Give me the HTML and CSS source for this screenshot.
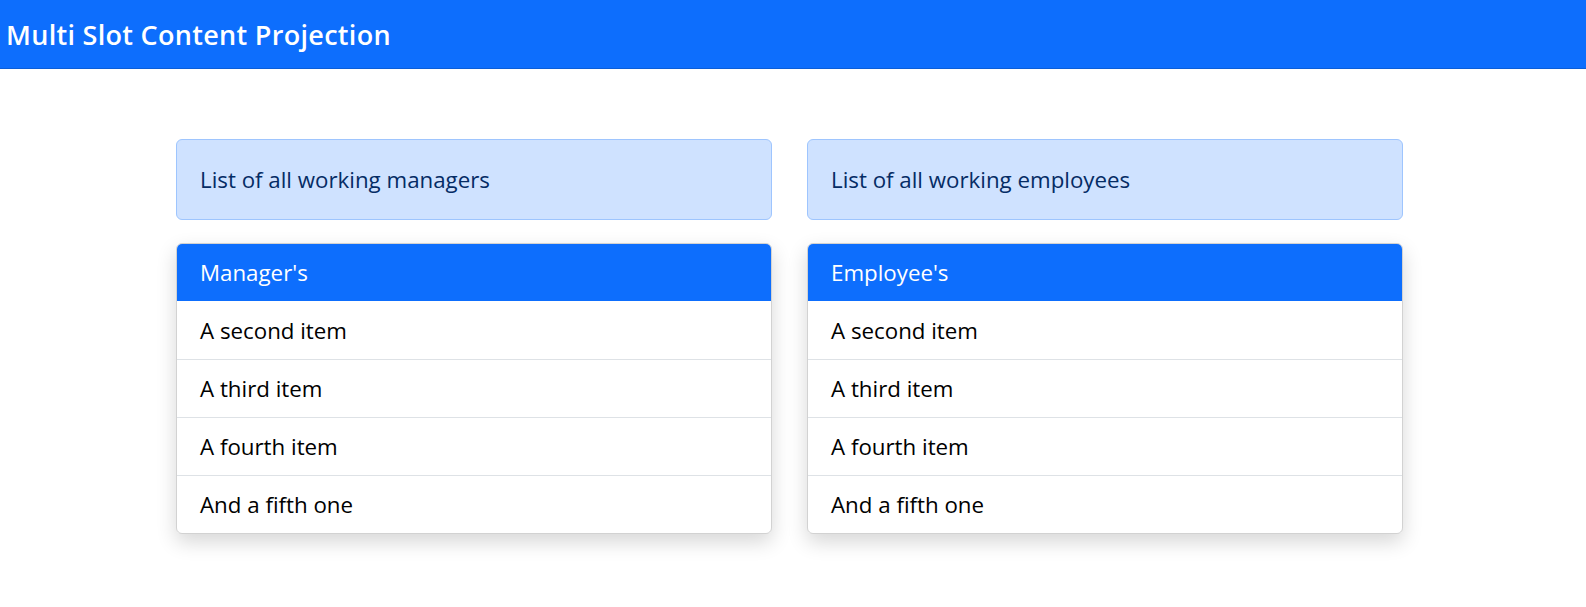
FILE: index.html
```html
<!DOCTYPE html>
<html lang="en">
<head>
    <meta charset="UTF-8">
    <meta name="viewport" content="width=device-width, initial-scale=1.0">
    <title>Multi Slot Content Projection</title>
    <link rel="stylesheet" href="styles.css">
</head>
<body>
    <nav class="navbar">
        <h1 class="brand">Multi Slot Content Projection</h1>
    </nav>

    <div class="container">
        <div class="column">
            <div class="alert">List of all working managers</div>
            <div class="card">
                <div class="card-header">Manager's</div>
                <ul class="list">
                    <li>A second item</li>
                    <li>A third item</li>
                    <li>A fourth item</li>
                    <li>And a fifth one</li>
                </ul>
            </div>
        </div>

        <div class="column">
            <div class="alert">List of all working employees</div>
            <div class="card">
                <div class="card-header">Employee's</div>
                <ul class="list">
                    <li>A second item</li>
                    <li>A third item</li>
                    <li>A fourth item</li>
                    <li>And a fifth one</li>
                </ul>
            </div>
        </div>
    </div>
</body>
</html>
```

FILE: styles.css
```css
body {
    margin: 0;
    font-family: "Open Sans", "Noto Sans", sans-serif;
    color: #000;
    background-color: #fff;
}
.navbar {
    height: 68px;
    background-color: #0d6efd;
    border-bottom: 1px solid #0b5ed7;
    display: flex;
    align-items: center;
    padding-left: 6px;
}
.brand {
    margin: 0;
    color: #fff;
    font-size: 27px;
    font-weight: 600;
    letter-spacing: 0.3px;
}
.container {
    display: flex;
    gap: 35px;
    margin-left: 176px;
    padding-top: 70px;
    padding-bottom: 70px;
}
.column {
    width: 596px;
}
.alert {
    height: 79px;
    display: flex;
    align-items: center;
    padding-left: 23px;
    background-color: #cfe2ff;
    border: 1px solid #9ec5fe;
    border-radius: 6px;
    color: #052c65;
    font-size: 22.3px;
}
.card {
    margin-top: 23px;
    border: 1px solid rgba(0, 0, 0, 0.175);
    border-radius: 6px;
    box-shadow: 0 8px 20px rgba(0, 0, 0, 0.16);
    overflow: hidden;
}
.card-header {
    height: 57px;
    display: flex;
    align-items: center;
    padding-left: 23px;
    background-color: #0d6efd;
    color: #fff;
    font-size: 22.3px;
}
.list {
    list-style: none;
    margin: 0;
    padding: 0;
}
.list li {
    height: 57px;
    display: flex;
    align-items: center;
    padding-left: 23px;
    font-size: 22.3px;
    border-top: 1px solid #dee2e6;
}
.list li:first-child {
    border-top: none;
    height: 58px;
}
```
